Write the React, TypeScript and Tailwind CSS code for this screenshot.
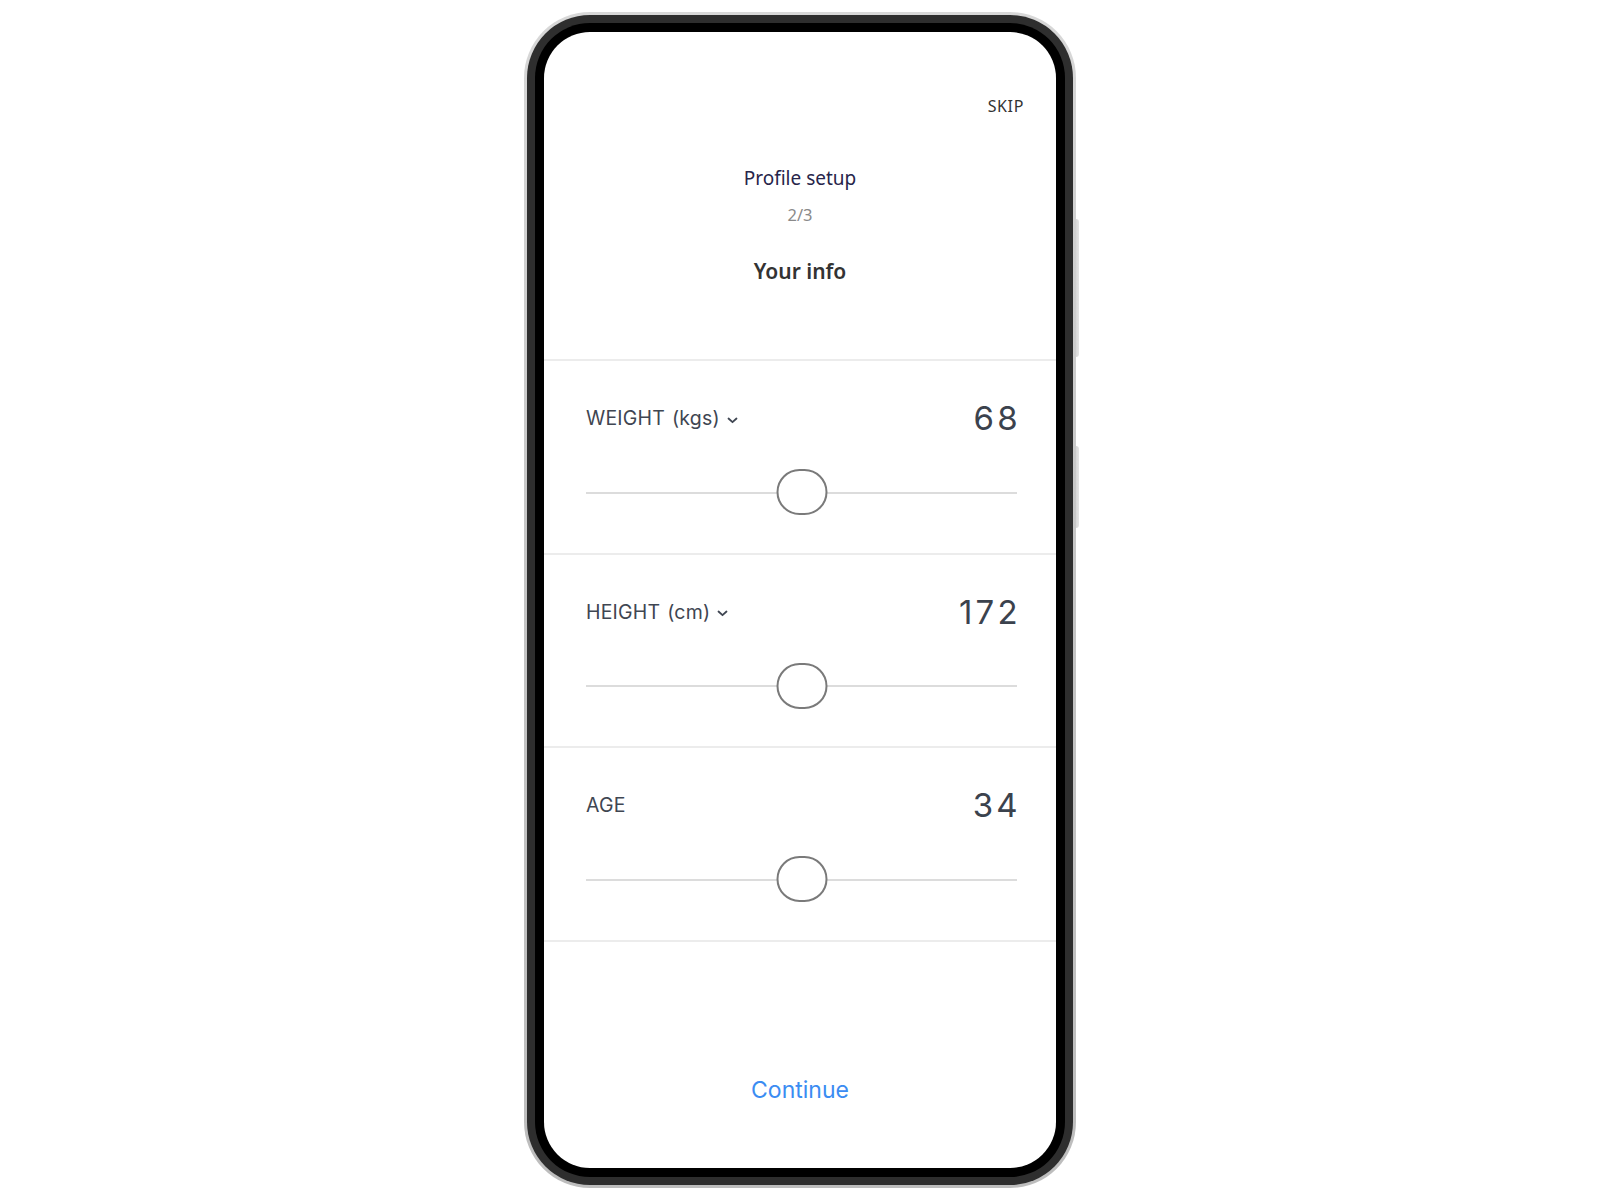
import React from "react";

function Chevron() {
  return (
    <svg width="11" height="7" viewBox="0 0 11 7" fill="none" className="ml-[7px] mt-[2px]">
      <path d="M1.5 1.5L5.5 5.2L9.5 1.5" stroke="#3f4652" strokeWidth="1.8" strokeLinecap="round" strokeLinejoin="round" />
    </svg>
  );
}

function Section({ label, unit, value }: { label: string; unit?: string; value: string }) {
  return (
    <div className="h-[193.5px] border-b-2 border-[#ececec] pl-[42px] pr-[39px] pt-[38px]">
      <div className="flex h-[40px] items-center justify-between">
        <div className="flex items-center text-[19.5px] text-[#3f4652] font-['Inter',sans-serif] tracking-[0.01em]">
          <span>{label}</span>
          {unit && <span className="ml-[7px]">{unit}</span>}
          {unit && <Chevron />}
        </div>
        <div className="mr-[-4px] text-[33px] text-[#3b424d] font-['Inter',sans-serif] tracking-[0.1em]">{value}</div>
      </div>
      <div className="relative mt-[30px] flex h-[47px] items-center">
        <div className="h-[2px] w-full bg-[#dcdcdc]" />
        <div className="absolute left-1/2 top-0 h-[46px] w-[51px] -translate-x-1/2 rounded-full border-2 border-[#7a7a7a] bg-white" />
      </div>
    </div>
  );
}

export default function App() {
  return (
    <div className="min-h-[1200px] w-full bg-white">
      <div className="relative mx-auto mt-[12px] h-[1176px] w-[552px]">
        <div className="absolute right-[-3px] top-[207px] h-[138px] w-[5px] rounded-r-[3px] bg-gradient-to-r from-[#cfcfcf] to-[#e4e4e4]" />
        <div className="absolute right-[-3px] top-[434px] h-[82px] w-[5px] rounded-r-[3px] bg-gradient-to-r from-[#cfcfcf] to-[#e4e4e4]" />
        <div className="relative h-full w-full rounded-[66px] bg-gradient-to-b from-[#d8d8d8] via-[#c4c4c4] to-[#bdbdbd] p-[3px]">
          <div className="h-full w-full rounded-[63px] bg-[#2e2e2e] p-[8px]">
            <div className="h-full w-full rounded-[55px] bg-black p-[9px]">
              <div className="flex h-full w-full flex-col overflow-hidden rounded-[46px] bg-white">
                <div className="flex flex-col items-center border-b-2 border-[#ececec] pb-[74px]">
                  <div className="mt-[64px] flex h-[20px] w-full items-center justify-end pr-[32px] text-[16px] tracking-[0.04em] text-[#333] font-['Noto_Sans',sans-serif]">
                    SKIP
                  </div>
                  <div className="mt-[50px] h-[24px] text-[19px] leading-[24px] text-[#27254a] font-['Noto_Sans',sans-serif]">
                    Profile setup
                  </div>
                  <div className="mt-[15px] h-[20px] text-[16.5px] leading-[20px] text-[#8a8a8a] font-['Noto_Sans',sans-serif]">
                    2/3
                  </div>
                  <div className="mt-[32px] h-[28px] text-[21px] font-semibold leading-[28px] text-[#333333] font-['Noto_Sans',sans-serif]">
                    Your info
                  </div>
                </div>
                <Section label="WEIGHT" unit="(kgs)" value="68" />
                <Section label="HEIGHT" unit="(cm)" value="172" />
                <Section label="AGE" value="34" />
                <div className="mt-[134px] flex h-[30px] items-center justify-center text-[23px] text-[#3b8cf2] font-['Inter',sans-serif]">
                  Continue
                </div>
              </div>
            </div>
          </div>
        </div>
      </div>
    </div>
  );
}
